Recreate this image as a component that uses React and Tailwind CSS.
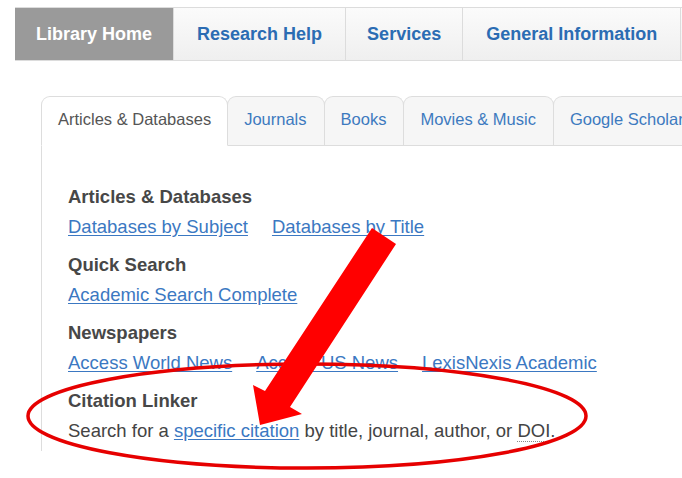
import React from 'react';

const navItems = [
  { label: 'Library Home', pad: 'px-[21px]' },
  { label: 'Research Help', pad: 'px-[23px]' },
  { label: 'Services', pad: 'px-[21px]' },
  { label: 'General Information', pad: 'px-[23px]' },
];
const tabs = ['Articles & Databases', 'Journals', 'Books', 'Movies & Music', 'Google Scholar'];

function Links({ items }) {
  return (
    <div className="flex gap-6 whitespace-nowrap">
      {items.map((item) => (
        <a key={item} href="#" className="text-[#3b78c2] underline underline-offset-2">
          {item}
        </a>
      ))}
    </div>
  );
}

export default function App() {
  return (
    <div className="relative w-[682px] h-[478px] overflow-hidden bg-white font-['Liberation_Sans',Arial,sans-serif]">
      {/* top navigation */}
      <div className="mt-[7px] ml-[15px] flex h-[54px] border-y border-[#dcdcdc] whitespace-nowrap">
        {navItems.map((item, i) => (
          <div
            key={item.label}
            className={
              i === 0
                ? `flex items-center pt-px ${item.pad} bg-[#9a9a9a] text-white text-[18px] font-bold border-r border-[#dcdcdc]`
                : `flex items-center pt-px ${item.pad} bg-gradient-to-b from-[#fbfbfb] to-[#efefef] text-[#2b6cb3] text-[18px] font-bold border-r border-[#dcdcdc]`
            }
          >
            {item.label}
          </div>
        ))}
        <div className="flex-1 bg-gradient-to-b from-[#fbfbfb] to-[#efefef]" />
      </div>

      {/* tabs */}
      <div className="mt-[35px] ml-[41px] flex h-[50px] border-b border-[#dddddd] whitespace-nowrap">
        {tabs.map((tab, i) => (
          <div
            key={tab}
            className={
              i === 0
                ? 'flex items-center pb-[3px] px-4 -mb-px h-[50px] rounded-t-[9px] border border-[#dddddd] border-b-white bg-white text-[16.5px] text-[#555]'
                : 'flex items-center pb-[3px] pl-4 pr-[17px] h-[49px] -ml-px rounded-t-[9px] border border-[#dddddd] border-b-0 bg-[#f6f6f6] text-[16.5px] text-[#3d7abf]'
            }
          >
            {tab}
          </div>
        ))}
      </div>

      {/* panel */}
      <div className="ml-[41px] h-[305px] border-l border-[#dddddd] pt-[36px] pl-[26px] text-[18.5px] leading-[30px]">
        <div className="mb-2">
          <h3 className="font-bold text-[#474747]">Articles &amp; Databases</h3>
          <Links items={['Databases by Subject', 'Databases by Title']} />
        </div>
        <div className="mb-2">
          <h3 className="font-bold text-[#474747]">Quick Search</h3>
          <Links items={['Academic Search Complete']} />
        </div>
        <div className="mb-2">
          <h3 className="font-bold text-[#474747]">Newspapers</h3>
          <Links items={['Access World News', 'Access US News', 'LexisNexis Academic']} />
        </div>
        <div>
          <h3 className="font-bold text-[#474747]">Citation Linker</h3>
          <p className="text-[#444] whitespace-nowrap">
            Search for a{' '}
            <a href="#" className="text-[#3b78c2] underline underline-offset-2">
              specific citation
            </a>{' '}
            by title, journal, author, or{' '}
            <abbr className="no-underline border-b border-dotted border-[#888]">DOI</abbr>.
          </p>
        </div>
      </div>

      {/* annotation overlay */}
      <svg className="absolute inset-0 pointer-events-none" width="682" height="478" viewBox="0 0 682 478">
        <ellipse cx="307" cy="416" rx="279" ry="52" fill="none" stroke="#e60000" strokeWidth="3.5" />
        <polygon
          points="372,228 396,244 290,407 302,414 260,425 253,385 265,391"
          fill="#ff0000"
        />
      </svg>
    </div>
  );
}
